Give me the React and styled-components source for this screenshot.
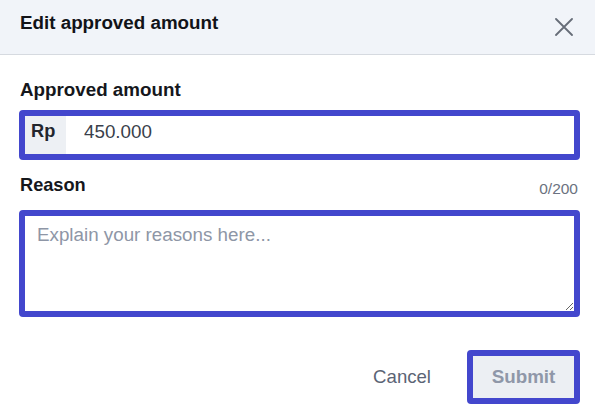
import React from "react";
import styled, { createGlobalStyle } from "styled-components";

const Global = createGlobalStyle`
  html, body { margin: 0; padding: 0; background: #ffffff; }
  body { font-family: "Liberation Sans", Arial, sans-serif; }
  * { box-sizing: border-box; }
`;

const Dialog = styled.div`
  width: 595px;
  height: 415px;
  background: #ffffff;
  display: flex;
  flex-direction: column;
`;

const Header = styled.div`
  height: 55px;
  flex: none;
  display: flex;
  align-items: center;
  justify-content: space-between;
  padding: 0 22px 0 20px;
  background: #f1f4f9;
  border-bottom: 1px solid #d6dae0;
`;

const Title = styled.h2`
  margin: 0 0 8px 0;
  font-size: 18.8px;
  line-height: 22px;
  font-weight: 700;
  color: #111318;
`;

const CloseButton = styled.button`
  width: 18px;
  height: 18px;
  padding: 0;
  border: 0;
  background: transparent;
  display: flex;
  cursor: pointer;
`;

const Body = styled.div`
  padding: 24px 15px 0 19px;
  display: flex;
  flex-direction: column;
`;

const Label = styled.label`
  display: block;
  margin: 0 0 0 1px;
  font-size: ${(p) => p.$size || "18.8px"};
  line-height: 22px;
  font-weight: 700;
  color: #15171c;
`;

const InputGroup = styled.div`
  margin-top: 9px;
  height: 50px;
  display: flex;
  border: 6px solid #4347cd;
  border-radius: 4px;
  overflow: hidden;
`;

const Prefix = styled.span`
  width: 41px;
  flex: none;
  display: flex;
  align-items: center;
  padding: 0 0 7px 6px;
  background: #edf0f4;
  font-size: 18.2px;
  font-weight: 700;
  color: #23262d;
`;

const AmountInput = styled.input`
  flex: 1;
  min-width: 0;
  border: 0;
  outline: none;
  padding: 0 0 7px 18px;
  font-family: inherit;
  font-size: 18.8px;
  color: #3a3f4b;
  background: #ffffff;
`;

const LabelRow = styled.div`
  margin-top: 14px;
  height: 22px;
  display: flex;
  justify-content: space-between;
  align-items: flex-start;
`;

const Counter = styled.span`
  margin: 6px 2px 0 0;
  font-size: 15.5px;
  line-height: 18px;
  color: #6b7280;
`;

const TextArea = styled.textarea`
  margin-top: 14px;
  width: 100%;
  height: 107px;
  display: block;
  border: 6px solid #4347cd;
  border-radius: 4px;
  padding: 8px 12px;
  outline: none;
  resize: vertical;
  font-family: inherit;
  font-size: 18.8px;
  line-height: 22px;
  color: #3a3f4b;
  &::placeholder { color: #8e96a6; }
`;

const Footer = styled.div`
  margin-top: 33px;
  display: flex;
  justify-content: flex-end;
  align-items: center;
  gap: 18px;
`;

const TextButton = styled.button`
  border: 0;
  background: transparent;
  padding: 0 18px;
  font-family: inherit;
  font-size: 18.6px;
  color: #5b6475;
  cursor: pointer;
`;

const SubmitButton = styled.button`
  width: 113px;
  height: 54px;
  border: 6px solid #4347cd;
  border-radius: 4px;
  background: #eceff3;
  padding: 0;
  font-family: inherit;
  font-size: 18.8px;
  font-weight: 700;
  color: #8f97a8;
`;

export default function App() {
  return (
    <>
      <Global />
      <Dialog>
        <Header>
          <Title>Edit approved amount</Title>
          <CloseButton aria-label="Close">
            <svg width="18" height="18" viewBox="0 0 18 18" fill="none">
              <path d="M1 1 L17 17 M17 1 L1 17" stroke="#666d78" strokeWidth="1.8" strokeLinecap="round" />
            </svg>
          </CloseButton>
        </Header>
        <Body>
          <Label>Approved amount</Label>
          <InputGroup>
            <Prefix>Rp</Prefix>
            <AmountInput defaultValue="450.000" />
          </InputGroup>
          <LabelRow>
            <Label $size="18.2px">Reason</Label>
            <Counter>0/200</Counter>
          </LabelRow>
          <TextArea placeholder="Explain your reasons here..." />
          <Footer>
            <TextButton>Cancel</TextButton>
            <SubmitButton disabled>Submit</SubmitButton>
          </Footer>
        </Body>
      </Dialog>
    </>
  );
}
